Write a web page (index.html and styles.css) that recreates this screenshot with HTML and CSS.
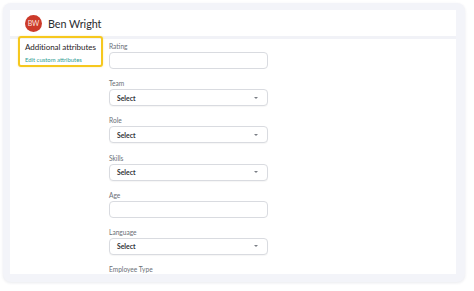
FILE: index.html
```html
<!DOCTYPE html>
<html>
<head>
<meta charset="utf-8">
<link rel="stylesheet" href="styles.css">
</head>
<body>
<div class="frame">
  <div class="panel">
    <div class="header">
      <div class="avatar">BW</div>
      <div class="name">Ben Wright</div>
    </div>
    <div class="divider"></div>
    <div class="content">
      <div class="side">
        <div class="highlight">
          <div class="side-title">Additional attributes</div>
          <div class="side-link">Edit custom attributes</div>
        </div>
      </div>
      <div class="form">
        <div class="field">
          <div class="label">Rating</div>
          <div class="input"></div>
        </div>
        <div class="field">
          <div class="label">Team</div>
          <div class="input select"><span>Select</span><span class="caret"></span></div>
        </div>
        <div class="field">
          <div class="label">Role</div>
          <div class="input select"><span>Select</span><span class="caret"></span></div>
        </div>
        <div class="field">
          <div class="label">Skills</div>
          <div class="input select"><span>Select</span><span class="caret"></span></div>
        </div>
        <div class="field">
          <div class="label">Age</div>
          <div class="input"></div>
        </div>
        <div class="field">
          <div class="label">Language</div>
          <div class="input select"><span>Select</span><span class="caret"></span></div>
        </div>
        <div class="field last">
          <div class="label">Employee Type</div>
        </div>
      </div>
    </div>
  </div>
</div>
</body>
</html>
```
FILE: styles.css
```css
html, body {
  margin: 0;
  padding: 0;
  background: #ffffff;
  font-family: Lato, "Open Sans", sans-serif;
}
.frame {
  margin: 3px;
  width: 462px;
  height: 279px;
  box-sizing: border-box;
  background: #f3f4f9;
  border-radius: 8px;
  padding: 7px 9px 8px 7px;
  box-shadow: 0 1px 3px rgba(40, 50, 90, 0.10);
}
.panel {
  background: #ffffff;
  height: 100%;
  overflow: hidden;
}
.header {
  height: 26px;
  display: flex;
  align-items: center;
  padding-left: 15px;
  gap: 6px;
}
.avatar {
  width: 17px;
  height: 17px;
  border-radius: 50%;
  background: #cc3a2a;
  color: #fbe3df;
  font-size: 7px;
  display: flex;
  align-items: center;
  justify-content: center;
}
.name {
  font-size: 10.8px;
  font-weight: 400;
  color: #2a2c30;
  letter-spacing: -0.05px;
}
.divider {
  height: 3px;
  background: #f1f2f7;
}
.content {
  display: flex;
}
.side {
  width: 91px;
  padding-left: 8px;
}
.highlight {
  margin-top: -3px;
  width: 85px;
  height: 31px;
  box-sizing: border-box;
  border: 2.5px solid #f6c81e;
  border-radius: 3px;
  padding: 4px 0 0 5px;
  box-shadow: 0 0 2px rgba(246, 200, 30, 0.4);
}
.side-title {
  font-size: 8px;
  font-weight: 400;
  color: #1f2125;
  white-space: nowrap;
  line-height: 11px;
  letter-spacing: -0.05px;
}
.side-link {
  font-size: 5.9px;
  color: #2f9e95;
  margin-top: 3px;
  white-space: nowrap;
}
.form {
  padding-top: 2px;
}
.field {
  height: 37.2px;
}
.field.last {
  height: 12px;
}
.label {
  font-size: 6.6px;
  color: #6b6f76;
  line-height: 10px;
  height: 10px;
  margin-bottom: 1px;
}
.input {
  width: 159px;
  height: 17px;
  box-sizing: border-box;
  border: 1px solid #d9dbe0;
  border-radius: 4px;
  background: #fff;
}
.select {
  display: flex;
  align-items: center;
  justify-content: space-between;
  padding: 0 9px 0 7px;
  font-size: 6.8px;
  font-weight: 700;
  color: #2f3135;
  box-shadow: 0 1px 1px rgba(0,0,0,0.04);
}
.caret {
  width: 0;
  height: 0;
  border-left: 2px solid transparent;
  border-right: 2px solid transparent;
  border-top: 2px solid #7a7e85;
}
```
